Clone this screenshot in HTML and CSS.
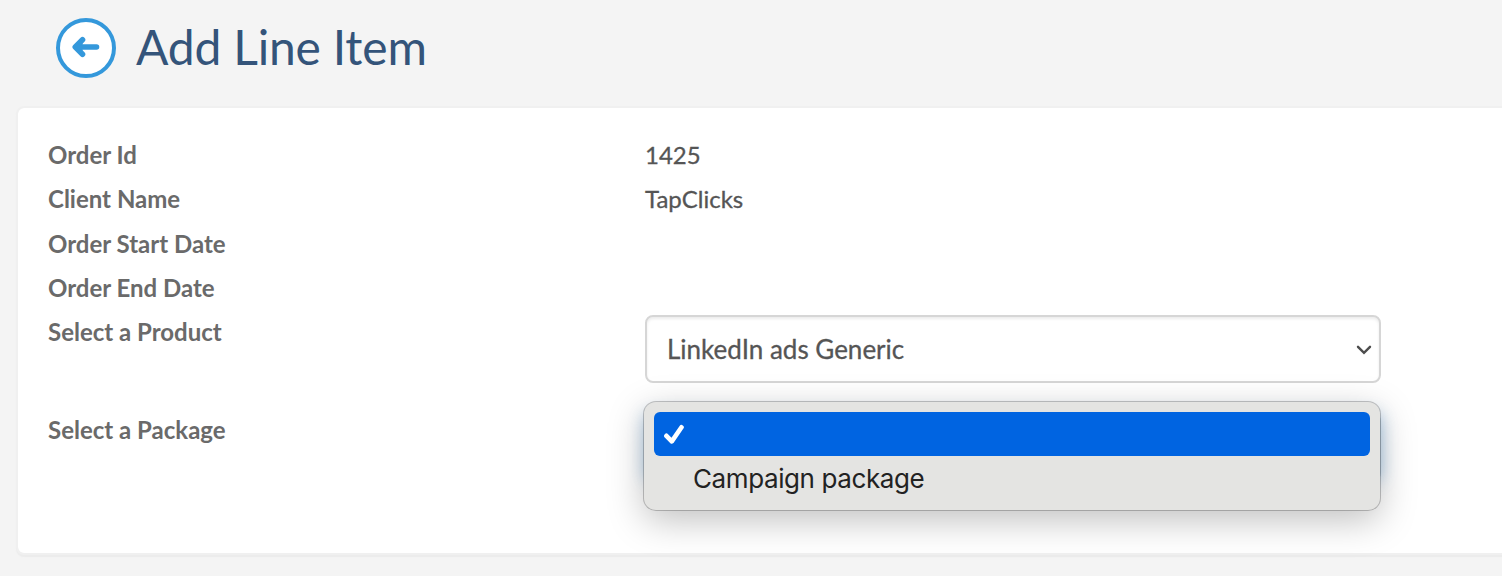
FILE: index.html
```
<!DOCTYPE html>
<html lang="en">
<head>
  <meta charset="UTF-8">
  <meta name="viewport" content="width=device-width, initial-scale=1">
  <title>Add Line Item</title>
  <link rel="stylesheet" href="styles.css">
</head>
<body>
  <header class="page-header">
    <a class="back-btn" href="#" aria-label="Back">
      <svg width="28" height="22" viewBox="0 0 28 22">
        <path d="M4 11H24.5M10.5 3.8L3.3 11L10.5 18.2" fill="none" stroke="#3498db" stroke-width="5.6" stroke-linecap="round" stroke-linejoin="round"/>
        <path d="M3 11L10.5 4V18Z" fill="#3498db"/>
      </svg>
    </a>
    <h1>Add Line Item</h1>
  </header>

  <main class="card">
    <div class="row">
      <div class="label">Order Id</div>
      <div class="value">1425</div>
    </div>
    <div class="row">
      <div class="label">Client Name</div>
      <div class="value">TapClicks</div>
    </div>
    <div class="row">
      <div class="label">Order Start Date</div>
      <div class="value"></div>
    </div>
    <div class="row">
      <div class="label">Order End Date</div>
      <div class="value"></div>
    </div>
    <div class="row row-select">
      <div class="label">Select a Product</div>
      <div class="select">
        <span>LinkedIn ads Generic</span>
        <svg class="chevron" width="16" height="12" viewBox="0 0 16 12">
          <path d="M2 3.8L8 9.8L14 3.8" fill="none" stroke="#4d4d4d" stroke-width="2.4" stroke-linecap="round"/>
        </svg>
      </div>
    </div>
    <div class="row row-select">
      <div class="label">Select a Package</div>
      <div class="select select-focus">
        <!-- open option list -->
        <ul class="menu">
          <li class="option selected">
            <svg width="20" height="20" viewBox="0 0 20 20">
              <path d="M2.4 11.8L7.8 17.4L17.5 3.3" fill="none" stroke="#fff" stroke-width="4.6" stroke-linecap="round" stroke-linejoin="round"/>
            </svg>
          </li>
          <li class="option">Campaign package</li>
        </ul>
      </div>
    </div>
  </main>
</body>
</html>
```
FILE: styles.css
```
*, *::before, *::after {
  box-sizing: border-box;
}
body {
  margin: 0;
  height: 576px;
  overflow: hidden;
  background: #f4f4f4;
  color: #555;
  font-family: Lato, sans-serif;
  font-size: 24px;
}
/* Header */
.page-header {
  display: flex;
  align-items: center;
  gap: 20px;
  height: 106px;
  padding: 0 0 10px 56px;
}
.back-btn {
  display: flex;
  align-items: center;
  justify-content: center;
  width: 60px;
  height: 60px;
  padding-bottom: 2px;
  background: #fff;
  border: 4px solid #3498db;
  border-radius: 50%;
}
h1 {
  margin: 0;
  padding-bottom: 2px;
  color: #34547a;
  font-size: 48px;
  font-weight: 400;
  line-height: 60px;
  letter-spacing: -0.2px;
}
/* Card runs off the right edge */
.card {
  height: 449px;
  margin: 0 -10px 0 16px;
  padding: 26px 30px 0;
  background: #fff;
  background-clip: padding-box;
  border: 2px solid #f0f0f0;
  border-radius: 8px;
  box-shadow: 0 2px 1px #ececec;
}
.row {
  display: grid;
  grid-template-columns: 597px 736px;
  height: 44.25px;
  line-height: 42px;
}
.row-select {
  height: 98px;
}
.label {
  color: #6a6a6a;
  font-weight: 700;
}
.value, .select span {
  -webkit-text-stroke: 0.3px #555;
}
/* Selects */
.select {
  position: relative;
  display: flex;
  align-items: center;
  justify-content: space-between;
  height: 68px;
  margin-top: 4px;
  padding: 0 7px 0 20px;
  background: #fff;
  border: 2px solid #d6d6d6;
  border-radius: 8px;
  box-shadow: inset 0 2px 3px rgba(0, 0, 0, 0.08);
  font-size: 26px;
}
.select-focus {
  border-color: #c3d7e8;
  box-shadow: 0 0 16px rgba(52, 140, 219, 0.4);
}
/* Option list over the focused select */
.menu {
  position: absolute;
  top: -13px;
  left: -3px;
  width: 736px;
  height: 108px;
  margin: 0;
  padding: 10px;
  list-style: none;
  background: #e4e4e2;
  border-radius: 12px;
  box-shadow: 0 0 0 1px rgba(0, 0, 0, 0.22), 0 10px 36px rgba(0, 0, 0, 0.25);
}
.option {
  display: flex;
  align-items: center;
  height: 44px;
  padding: 2px 0 0 39px;
  border-radius: 6px;
  color: #222;
  font-family: Inter, sans-serif;
  font-size: 26px;
  letter-spacing: -0.4px;
}
.option.selected {
  padding: 0 0 0 10px;
  background: #0064e1;
}
```
